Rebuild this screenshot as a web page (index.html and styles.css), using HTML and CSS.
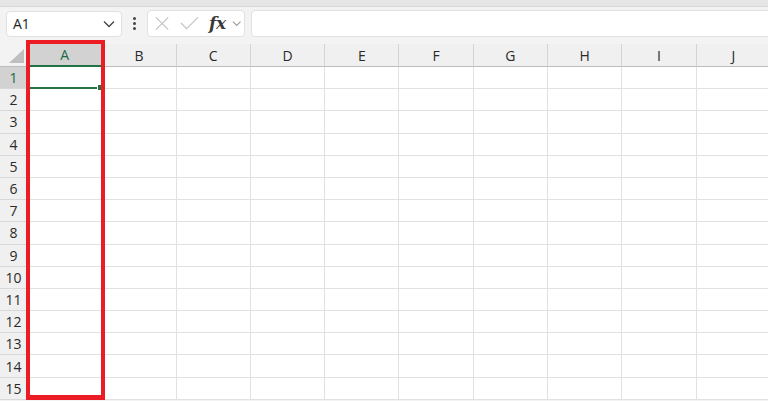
FILE: index.html
```html
<!DOCTYPE html>
<html lang="en">
<head>
  <meta charset="UTF-8" />
  <meta name="viewport" content="width=device-width, initial-scale=1" />
  <title>Sheet</title>
  <link rel="stylesheet" href="styles.css">
</head>
<body>
  <div class="ribbon-edge"></div>

  <div class="formula-bar">
    <div class="name-box">
      <span>A1</span>
      <svg class="chevron" width="12" height="8" viewBox="0 0 12 8"><path d="M1 1.5 L6 6.5 L11 1.5" fill="none" stroke="#444" stroke-width="1.3"/></svg>
    </div>
    <div class="dots"><i></i><i></i><i></i></div>
    <div class="fx-box">
      <svg class="cancel" width="15" height="15" viewBox="0 0 15 15"><path d="M1 1 L14 14 M14 1 L1 14" stroke="#c4c4c4" stroke-width="1.3"/></svg>
      <svg class="enter" width="20" height="15" viewBox="0 0 20 15"><path d="M1 7 L7 13 L19 1" fill="none" stroke="#c4c4c4" stroke-width="1.3"/></svg>
      <span class="fx">fx</span>
      <svg class="fx-drop" width="10" height="7" viewBox="0 0 10 7"><path d="M1 1.5 L5 5.5 L9 1.5" fill="none" stroke="#999" stroke-width="1.1"/></svg>
    </div>
    <div class="formula-input"></div>
  </div>

  <div class="sheet-wrap">
    <div class="sheet" id="sheet"></div>
    <div class="highlight"></div>
  </div>

  <script>
    const sheet = document.getElementById("sheet");
    const cols = ["A", "B", "C", "D", "E", "F", "G", "H", "I", "J"];
    const rows = 15;

    // header row
    let corner = document.createElement("div");
    corner.className = "corner";
    sheet.appendChild(corner);
    cols.forEach((c) => {
      const h = document.createElement("div");
      h.className = "col-head" + (c === "A" ? " selected" : "");
      h.textContent = c;
      sheet.appendChild(h);
    });

    for (let r = 1; r <= rows; r++) {
      const rh = document.createElement("div");
      rh.className = "row-head" + (r === 1 ? " selected" : "");
      rh.textContent = r;
      sheet.appendChild(rh);
      cols.forEach((c) => {
        const cell = document.createElement("div");
        cell.className = "cell";
        if (r === 1 && c === "A") {
          cell.classList.add("active");
          const handle = document.createElement("span");
          handle.className = "fill-handle";
          cell.appendChild(handle);
        }
        sheet.appendChild(cell);
      });
    }
  </script>
</body>
</html>
```

FILE: styles.css
```css
body {
  margin: 0;
  width: 768px;
  height: 401px;
  overflow: hidden;
  background: #f3f3f3;
  font-family: "Open Sans", "Noto Sans", sans-serif;
  color: #262626;
}
.ribbon-edge {
  height: 6px;
  background: #e6e6e6;
  border-bottom: 1px solid #d8d8d8;
}
.formula-bar {
  display: flex;
  align-items: center;
  height: 27px;
  padding: 3px 0 0 6px;
}
.name-box {
  box-sizing: border-box;
  width: 116px;
  height: 26px;
  background: #fff;
  border: 1px solid #e0e0e0;
  border-radius: 4px;
  display: flex;
  align-items: center;
  justify-content: space-between;
  padding: 0 6px 0 6px;
  font-size: 14px;
  color: #222;
}
.dots {
  width: 25px;
  display: flex;
  flex-direction: column;
  align-items: center;
  gap: 2px;
}
.dots i {
  width: 3px;
  height: 3px;
  background: #444;
  border-radius: 50%;
}
.fx-box {
  box-sizing: border-box;
  width: 98px;
  height: 27px;
  background: #fff;
  border: 1px solid #e0e0e0;
  border-radius: 4px;
  display: flex;
  align-items: center;
  padding: 0 3px 0 7px;
}
.enter {
  margin-left: 11px;
}
.fx {
  font-family: "DejaVu Serif", "Liberation Serif", serif;
  font-style: italic;
  font-weight: bold;
  font-size: 17px;
  color: #3a3a3a;
  margin-left: 10px;
  line-height: 1;
  letter-spacing: -0.5px;
}
.fx-drop {
  margin-left: 6px;
}
.formula-input {
  box-sizing: border-box;
  flex: 1;
  height: 27px;
  margin-left: 6px;
  margin-right: -10px;
  background: #fff;
  border: 1px solid #e0e0e0;
  border-radius: 4px;
}
.sheet-wrap {
  position: relative;
  margin-top: 7px;
}
.sheet {
  display: grid;
  grid-template-columns: 28px repeat(10, 74.3px);
  grid-template-rows: 23px repeat(15, 22.2px);
}
.corner {
  position: relative;
  background: #f3f3f3;
  border-right: 1px solid #d0d0d0;
  border-bottom: 1px solid #bcbcbc;
}
.corner:after {
  content: "";
  position: absolute;
  right: 3px;
  bottom: 3px;
  border-left: 15px solid transparent;
  border-bottom: 14px solid #bfbfbf;
}
.col-head {
  background: #f0f0f0;
  border-right: 1px solid #d4d4d4;
  border-bottom: 1px solid #bcbcbc;
  display: flex;
  align-items: center;
  justify-content: center;
  font-size: 14px;
  color: #2a2a2a;
}
.col-head.selected {
  background: #d2d2d2;
  color: #1d6b44;
  border-bottom: 2px solid #217346;
}
.row-head {
  background: #f0f0f0;
  border-right: 1px solid #bcbcbc;
  border-bottom: 1px solid #d8d8d8;
  display: flex;
  align-items: center;
  justify-content: center;
  font-size: 14px;
  color: #2a2a2a;
}
.row-head.selected {
  background: #d2d2d2;
  color: #1d6b44;
}
.cell {
  background: #fff;
  border-right: 1px solid #e1e1e1;
  border-bottom: 1px solid #e1e1e1;
}
.cell.active {
  position: relative;
  border-bottom: 2px solid #217346;
}
.fill-handle {
  position: absolute;
  right: -3px;
  bottom: -4px;
  width: 5px;
  height: 5px;
  background: #217346;
  border: 1px solid #fff;
}
.highlight {
  position: absolute;
  left: 26px;
  top: -4px;
  width: 79px;
  height: 360px;
  box-sizing: border-box;
  border: 4px solid #ec1c24;
  border-bottom-width: 5px;
}
```
